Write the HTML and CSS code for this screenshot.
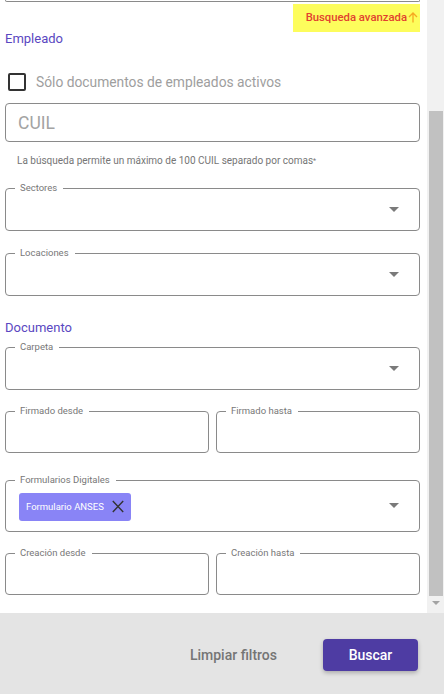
FILE: index.html
```html
<!DOCTYPE html>
<html lang="es">
<head>
<meta charset="utf-8">
<title>Filtros</title>
<link rel="stylesheet" href="styles.css">
</head>
<body>
<div class="app">
  <div class="scroll">
    <div class="content">
      <div class="stub"></div>
      <div class="adv-row">
        <div class="adv">Busqueda avanzada<svg class="adv-arrow" width="10" height="11" viewBox="0 0 10 11"><path d="M5 10.5V1M1 5L5 1L9 5" fill="none" stroke="#f6a821" stroke-width="1.3"/></svg></div>
      </div>
      <div class="section-title">Empleado</div>
      <div class="check-row">
        <span class="checkbox"></span>
        <span class="check-label">Sólo documentos de empleados activos</span>
      </div>
      <div class="text-input">CUIL</div>
      <div class="hint">La búsqueda permite un máximo de 100 CUIL separado por comas<span class="mark">*</span></div>

      <fieldset class="field f-sectores">
        <legend>Sectores</legend>
        <div class="field-body"><span class="arrow"></span></div>
      </fieldset>

      <fieldset class="field f-locaciones">
        <legend>Locaciones</legend>
        <div class="field-body"><span class="arrow"></span></div>
      </fieldset>

      <div class="section-title doc-title">Documento</div>

      <fieldset class="field f-carpeta">
        <legend>Carpeta</legend>
        <div class="field-body"><span class="arrow"></span></div>
      </fieldset>

      <div class="date-row r-firmado">
        <fieldset class="field date-field">
          <legend>Firmado desde</legend>
          <div class="date-body"></div>
        </fieldset>
        <fieldset class="field date-field">
          <legend>Firmado hasta</legend>
          <div class="date-body"></div>
        </fieldset>
      </div>

      <fieldset class="field f-formularios">
        <legend>Formularios Digitales</legend>
        <div class="field-body tall">
          <span class="chip"><span class="chip-text">Formulario ANSES</span><svg class="chip-x" width="12" height="13" viewBox="0 0 12 13"><path d="M0.8 1L11.2 12M11.2 1L0.8 12" fill="none" stroke="#333" stroke-width="1.4"/></svg></span>
          <span class="arrow"></span>
        </div>
      </fieldset>

      <div class="date-row r-creacion">
        <fieldset class="field date-field">
          <legend>Creación desde</legend>
          <div class="date-body"></div>
        </fieldset>
        <fieldset class="field date-field">
          <legend>Creación hasta</legend>
          <div class="date-body"></div>
        </fieldset>
      </div>
    </div>
    <div class="scrollbar">
      <div class="thumb"></div>
      <div class="down"></div>
    </div>
  </div>
  <div class="footer">
    <button class="btn-clear">Limpiar filtros</button>
    <button class="btn-search">Buscar</button>
  </div>
</div>
</body>
</html>
```

FILE: styles.css
```css
* { box-sizing: border-box; }

html, body {
  margin: 0;
  padding: 0;
  background: #ffffff;
}

body {
  font-family: Roboto, "Liberation Sans", Arial, sans-serif;
}

.app {
  width: 444px;
  height: 694px;
  display: flex;
  flex-direction: column;
  overflow: hidden;
}

.scroll {
  height: 613px;
  display: flex;
  background: #ffffff;
  overflow: hidden;
}

.content {
  width: 427px;
  padding: 0 7px 0 5px;
  display: flex;
  flex-direction: column;
}

.stub {
  height: 2px;
  border: 1px solid #8a8a8a;
  border-top: 0;
  border-radius: 0 0 4px 4px;
}

.adv-row {
  margin-top: 2px;
  display: flex;
  justify-content: flex-end;
}

.adv {
  height: 28px;
  width: 127px;
  background: #fdfd5c;
  color: #e2412f;
  font-size: 11.3px;
  font-weight: 500;
  line-height: 14px;
  display: flex;
  align-items: center;
  justify-content: flex-end;
  padding-right: 2px;
  padding-bottom: 1px;
}

.adv-arrow {
  margin-left: 1px;
  margin-top: -1px;
}

.section-title {
  font-size: 13px;
  line-height: 14px;
  color: #5a47c1;
}

.doc-title {
  margin-top: 25px;
}

.check-row {
  margin-top: 27px;
  margin-left: 3px;
  display: flex;
  align-items: center;
  height: 18px;
}

.checkbox {
  width: 18px;
  height: 18px;
  border: 2px solid #333333;
  border-radius: 2px;
  flex: none;
}

.check-label {
  margin-left: 10px;
  font-size: 13.8px;
  line-height: 18px;
  color: #9e9e9e;
}

.text-input {
  margin-top: 12px;
  height: 39px;
  border: 1px solid #8a8a8a;
  border-radius: 4px;
  padding-left: 12px;
  display: flex;
  align-items: center;
  font-size: 17.5px;
  color: #a3a3a3;
}

.hint {
  margin-top: 12px;
  margin-left: 12px;
  font-size: 10px;
  line-height: 14px;
  color: #757575;
}

.mark {
  font-size: 7px;
  vertical-align: top;
}

.field {
  margin: 0;
  padding: 0;
  border: 1px solid #8a8a8a;
  border-radius: 4px;
  min-inline-size: 0;
}

.field legend {
  margin-left: 9px;
  padding: 0 6px 0 5px;
  font-size: 9.5px;
  line-height: 10px;
  color: #777777;
}

.f-sectores { margin-top: 15px; }
.f-locaciones { margin-top: 17px; }
.f-carpeta { margin-top: 7px; }
.f-formularios { margin-top: 22px; }

.field-body {
  height: 37px;
  padding: 0 20px 5px 13px;
  display: flex;
  align-items: center;
}

.field-body .arrow {
  margin-left: auto;
}

.field-body.tall {
  height: 46px;
}

.arrow {
  width: 0;
  height: 0;
  border-left: 5px solid transparent;
  border-right: 5px solid transparent;
  border-top: 5px solid #7a7a7a;
}

.date-row {
  display: grid;
  grid-template-columns: 1fr 1fr;
  column-gap: 7px;
}

.r-firmado { margin-top: 16px; }
.r-creacion { margin-top: 16px; }

.date-body {
  height: 36px;
}

.chip {
  height: 28px;
  background: #8984f6;
  border-radius: 3px;
  color: #ffffff;
  font-size: 9.5px;
  display: flex;
  align-items: center;
  gap: 8px;
  padding: 0 7px;
  margin-top: 2px;
  white-space: nowrap;
  flex: none;
}

.chip-text {
  white-space: nowrap;
}

.chip-x {
  flex: none;
}

.scrollbar {
  width: 17px;
  background: #f1f1f1;
  padding-top: 111px;
  display: flex;
  flex-direction: column;
}

.thumb {
  width: 14px;
  height: 485px;
  margin-left: 2px;
  background: #c1c1c1;
}

.down {
  width: 0;
  height: 0;
  margin: 5px 0 0 5px;
  border-left: 4px solid transparent;
  border-right: 4px solid transparent;
  border-top: 4px solid #a3a3a3;
}

.footer {
  height: 81px;
  background: #e4e4e4;
  display: flex;
  justify-content: flex-end;
  align-items: center;
  padding: 3px 26px 0 0;
  gap: 30px;
}

.btn-clear {
  height: 32px;
  padding: 0 16px;
  background: transparent;
  border: 0;
  font-family: Roboto, "Liberation Sans", Arial, sans-serif;
  font-size: 14px;
  font-weight: 500;
  color: #757575;
}

.btn-search {
  width: 95px;
  height: 32px;
  background: #4e3ca3;
  border: 0;
  border-radius: 4px;
  color: #ffffff;
  font-family: Roboto, "Liberation Sans", Arial, sans-serif;
  font-size: 14px;
  font-weight: 500;
  box-shadow: 0 2px 4px rgba(0, 0, 0, 0.25);
}
```
